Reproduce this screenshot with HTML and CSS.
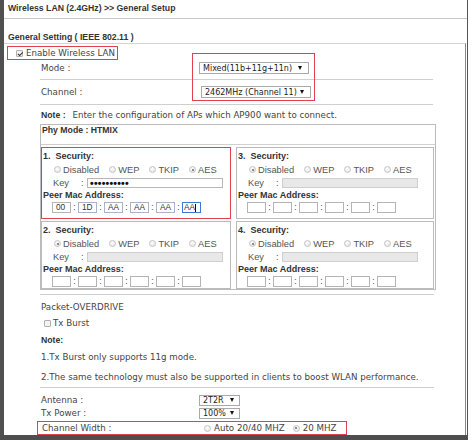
FILE: index.html
```html
<!DOCTYPE html>
<html>
<head>
<meta charset="utf-8">
<link rel="stylesheet" href="styles.css">
</head>
<body>
<div class="frame">
  <div class="title">Wireless LAN (2.4GHz) &gt;&gt; General Setup</div>
  <div class="gs">General Setting ( IEEE 802.11 )</div>
  <div class="tbl">
    <div class="hl-sel"></div>
    <div class="enable-wrap">
      <div class="enable"><span class="cb on"></span>Enable Wireless LAN</div>
    </div>
    <div class="row row-mode">
      <span class="lbl">Mode :</span>
      <span class="sel w110">Mixed(11b+11g+11n)<i class="arr"></i></span>
    </div>
    <div class="row row-ch">
      <span class="lbl">Channel :</span>
      <span class="sel w110 ch">2462MHz (Channel 11)<i class="arr"></i></span>
    </div>
    <div class="note"><b>Note :</b> Enter the configuration of APs which AP900 want to connect.</div>
    <div class="phy">
      <div class="phy-head">Phy Mode : HTMIX</div>
      <div class="grid">
        <div class="panel red">
          <div class="p-title">1.&nbsp; Security:</div>
          <div class="p-radios">
            <span class="opt"><span class="rb"></span>Disabled</span>
            <span class="opt"><span class="rb"></span>WEP</span>
            <span class="opt"><span class="rb"></span>TKIP</span>
            <span class="opt"><span class="rb on"></span>AES</span>
          </div>
          <div class="p-key"><span class="k">Key</span><span class="kc">:</span><span class="keyin on">••••••••••</span></div>
          <div class="p-peer">Peer Mac Address:</div>
          <div class="p-mac">
            <span class="mb">00</span><span class="mc">:</span><span class="mb bl">1D</span><span class="mc">:</span><span class="mb bl">AA</span><span class="mc">:</span><span class="mb bl">AA</span><span class="mc">:</span><span class="mb bl">AA</span><span class="mc">:</span><span class="mb focus">AA<i class="caret"></i></span>
          </div>
        </div>
        <div class="panel">
          <div class="p-title">3.&nbsp; Security:</div>
          <div class="p-radios">
            <span class="opt"><span class="rb on"></span>Disabled</span>
            <span class="opt"><span class="rb"></span>WEP</span>
            <span class="opt"><span class="rb"></span>TKIP</span>
            <span class="opt"><span class="rb"></span>AES</span>
          </div>
          <div class="p-key"><span class="k">Key</span><span class="kc">:</span><span class="keyin"></span></div>
          <div class="p-peer">Peer Mac Address:</div>
          <div class="p-mac">
            <span class="mb"></span><span class="mc">:</span><span class="mb"></span><span class="mc">:</span><span class="mb"></span><span class="mc">:</span><span class="mb"></span><span class="mc">:</span><span class="mb"></span><span class="mc">:</span><span class="mb"></span>
          </div>
        </div>
        <div class="panel">
          <div class="p-title">2.&nbsp; Security:</div>
          <div class="p-radios">
            <span class="opt"><span class="rb on"></span>Disabled</span>
            <span class="opt"><span class="rb"></span>WEP</span>
            <span class="opt"><span class="rb"></span>TKIP</span>
            <span class="opt"><span class="rb"></span>AES</span>
          </div>
          <div class="p-key"><span class="k">Key</span><span class="kc">:</span><span class="keyin"></span></div>
          <div class="p-peer">Peer Mac Address:</div>
          <div class="p-mac">
            <span class="mb"></span><span class="mc">:</span><span class="mb"></span><span class="mc">:</span><span class="mb"></span><span class="mc">:</span><span class="mb"></span><span class="mc">:</span><span class="mb"></span><span class="mc">:</span><span class="mb"></span>
          </div>
        </div>
        <div class="panel">
          <div class="p-title">4.&nbsp; Security:</div>
          <div class="p-radios">
            <span class="opt"><span class="rb on"></span>Disabled</span>
            <span class="opt"><span class="rb"></span>WEP</span>
            <span class="opt"><span class="rb"></span>TKIP</span>
            <span class="opt"><span class="rb"></span>AES</span>
          </div>
          <div class="p-key"><span class="k">Key</span><span class="kc">:</span><span class="keyin"></span></div>
          <div class="p-peer">Peer Mac Address:</div>
          <div class="p-mac">
            <span class="mb"></span><span class="mc">:</span><span class="mb"></span><span class="mc">:</span><span class="mb"></span><span class="mc">:</span><span class="mb"></span><span class="mc">:</span><span class="mb"></span><span class="mc">:</span><span class="mb"></span>
          </div>
        </div>
      </div>
    </div>
    <div class="sep"></div>
    <div class="t pk">Packet-OVERDRIVE</div>
    <div class="t tx"><span class="cb"></span>Tx Burst</div>
    <div class="t nb"><b>Note:</b></div>
    <div class="t n1">1.Tx Burst only supports 11g mode.</div>
    <div class="t n2">2.The same technology must also be supported in clients to boost WLAN performance.</div>
    <div class="row2 ant"><span class="lbl">Antenna :</span><span class="sel w40">2T2R<i class="arr"></i></span></div>
    <div class="row2 txp"><span class="lbl">Tx Power :</span><span class="sel w40">100%<i class="arr"></i></span></div>
    <div class="cw">
      <span class="lbl">Channel Width :</span>
      <span class="cw-opts">
        <span class="opt"><span class="rb"></span>Auto 20/40 MHZ</span>
        <span class="opt"><span class="rb on"></span>20 MHZ</span>
      </span>
    </div>
  </div>
</div>
</body>
</html>
```

FILE: styles.css
```css
* { box-sizing: border-box; margin: 0; padding: 0; }

body {
  width: 474px;
  height: 440px;
  overflow: hidden;
  background: #fff;
  font-family: "DejaVu Sans", sans-serif;
  font-size: 8.7px;
  color: #444;
}

.frame {
  width: 468px;
  height: 440px;
  border-left: 4px solid #505050;
  border-right: 1px solid #555;
  border-bottom: 5px solid #4e4e4e;
  display: flex;
  flex-direction: column;
}

.title {
  height: 20px;
  border-bottom: 1px solid #c8c8c8;
  padding-left: 4px;
  font: bold 8.7px "Liberation Sans", sans-serif;
  line-height: 17px;
  color: #333;
}

.gs {
  height: 25px;
  padding: 12px 0 0 4px;
  font: bold 8.7px "Liberation Sans", sans-serif;
  line-height: 12px;
  color: #333;
}

.tbl {
  flex: 1;
  position: relative;
  border-top: 1px solid #d4d4d4;
  border-right: 1px solid #888;
  margin-right: 1px;
}

.hl-sel {
  position: absolute;
  left: 188px;
  top: 9px;
  width: 123px;
  height: 48px;
  border: 1px solid #e0404f;
}

.enable-wrap { height: 16px; }

.enable {
  margin: 2px 0 0 3px;
  width: 111px;
  height: 14px;
  border: 1px solid #e0404f;
  display: flex;
  align-items: center;
  padding-left: 8px;
  color: #444;
  white-space: nowrap;
}

.cb {
  display: inline-block;
  width: 7px;
  height: 7px;
  border: 1px solid #b0b0b0;
  background: #f3f3f3;
  border-radius: 1px;
  margin-right: 3px;
  position: relative;
  flex: none;
}

.cb.on::after {
  content: "";
  position: absolute;
  left: 1.5px;
  top: 0px;
  width: 2px;
  height: 3.5px;
  border-right: 1.3px solid #333;
  border-bottom: 1.3px solid #333;
  transform: rotate(45deg);
}

.row {
  margin: 0 32px 0 36px;
  display: flex;
  align-items: flex-start;
  border-bottom: 1px solid #cfcfcf;
}

.row-mode { height: 18px; }
.row-ch { height: 25px; padding-top: 6px; }

.lbl {
  width: 159px;
  padding-left: 1px;
  line-height: 12px;
  flex: none;
  white-space: nowrap;
}

.sel {
  display: inline-flex;
  align-items: center;
  justify-content: space-between;
  height: 12px;
  border: 1px solid #a9a9a9;
  padding: 0 6px 0 3px;
  font: 8px "DejaVu Sans", sans-serif;
  color: #222;
  background: #fff;
  flex: none;
  white-space: nowrap;
}

.w110 { width: 110px; }
.ch { margin-left: 2px; }
.w40 { width: 41px; height: 11px; padding-right: 5px; }

.arr {
  width: 0;
  height: 0;
  border-left: 2.5px solid transparent;
  border-right: 2.5px solid transparent;
  border-top: 4px solid #111;
}

.note {
  height: 19px;
  padding: 4px 0 0 37px;
  line-height: 12px;
  white-space: nowrap;
}

.note b {
  font: bold 8.7px "Liberation Sans", sans-serif;
  color: #333;
  margin-right: 4px;
}

.phy {
  margin-left: 36px;
  width: 396px;
  border: 1px solid #bbb;
}

.phy-head {
  height: 20px;
  border-bottom: 1px solid #cfcfcf;
  padding-left: 1px;
  line-height: 13px;
  font: bold 8.7px "Liberation Sans", sans-serif;
  color: #333;
}

.grid {
  display: grid;
  grid-template-columns: 190px 198px;
  grid-template-rows: 72px 68px;
  column-gap: 5px;
  row-gap: 2px;
  padding-top: 2px;
}

.panel {
  border: 1px solid #bbb;
  padding: 2px 0 0 1px;
  font-family: "Liberation Sans", sans-serif;
  color: #444;
  overflow: hidden;
}

.panel.red { border-color: #e0404f; }

.p-title {
  font: bold 9px "Liberation Sans", sans-serif;
  line-height: 13px;
  color: #333;
}

.p-radios {
  height: 13px;
  display: flex;
  align-items: center;
  padding-left: 11px;
  font-size: 9.3px;
  color: #555;
}

.opt {
  display: inline-flex;
  align-items: center;
  margin-right: 10px;
  white-space: nowrap;
  flex: none;
}

.rb {
  display: inline-block;
  width: 7px;
  height: 7px;
  border-radius: 50%;
  border: 1px solid #c4c4c4;
  background: radial-gradient(circle at 40% 35%, #fdfdfd, #e2e2e2);
  margin-right: 2px;
  position: relative;
  flex: none;
}

.rb.on::after {
  content: "";
  position: absolute;
  left: 1.5px;
  top: 1.5px;
  width: 2px;
  height: 2px;
  border-radius: 50%;
  background: #6a6a6a;
}

.p-key {
  height: 14px;
  display: flex;
  align-items: center;
  padding-left: 10px;
  font-size: 9.3px;
  color: #555;
}

.k { width: 28px; }
.kc { width: 6px; }

.keyin {
  width: 136px;
  height: 10px;
  border: 1px solid #cfcfcf;
  background: #e8e8e8;
  display: flex;
  align-items: center;
  padding-left: 2px;
}

.keyin.on {
  background: #fff;
  border-color: #b8b8b8;
  font: bold 10.5px "Liberation Sans", sans-serif;
  color: #111;
  letter-spacing: 0.2px;
}

.p-peer {
  font: bold 9px "Liberation Sans", sans-serif;
  line-height: 11px;
  color: #333;
}

.p-mac {
  display: flex;
  margin-top: 1px;
  padding-left: 9px;
}

.mb {
  width: 19px;
  height: 11px;
  border: 1px solid #b4b4b4;
  background: #fff;
  font-size: 8.3px;
  line-height: 9px;
  padding-left: 3px;
  color: #333;
  position: relative;
  flex: none;
}

.mb.bl { border-color: #a8b4c8; }
.mb.focus { border-color: #3d7ad6; padding-left: 1px; }

.caret {
  display: inline-block;
  width: 1px;
  height: 8px;
  background: #111;
  vertical-align: top;
  margin-top: 0.5px;
}

.mc {
  width: 7px;
  text-align: center;
  font-size: 8.5px;
  line-height: 11px;
  color: #444;
  flex: none;
}

.sep {
  margin: 4px 31px 0 36px;
  height: 1px;
  background: #cfcfcf;
}

.t {
  margin-left: 36px;
  padding-left: 1px;
  line-height: 12px;
  white-space: nowrap;
}

.pk { margin-top: 6px; }
.tx { margin-top: 4px; padding-left: 4px; display: flex; align-items: center; }
.tx .cb { margin-right: 2px; }
.nb { margin-top: 5px; }
.nb b { font: bold 8.7px "Liberation Sans", sans-serif; color: #333; }
.n1 { margin-top: 5px; }
.n2 {
  margin-top: 8px;
  margin-right: 31px;
  padding-bottom: 4px;
  border-bottom: 1px solid #cfcfcf;
}

.row2 {
  margin-left: 36px;
  height: 12px;
  display: flex;
  align-items: center;
}

.ant { margin-top: 6px; }
.txp { margin-top: 1px; }

.cw {
  margin: 2px 0 0 33px;
  width: 310px;
  height: 14px;
  border: 1px solid #e0404f;
  padding-left: 3px;
  display: flex;
  align-items: center;
  white-space: nowrap;
  overflow: hidden;
}

.cw-opts {
  display: flex;
  align-items: center;
  padding-left: 4px;
  flex: none;
}

.cw-opts .rb { margin-right: 3px; }
.cw-opts .opt { margin-right: 8px; }
```
